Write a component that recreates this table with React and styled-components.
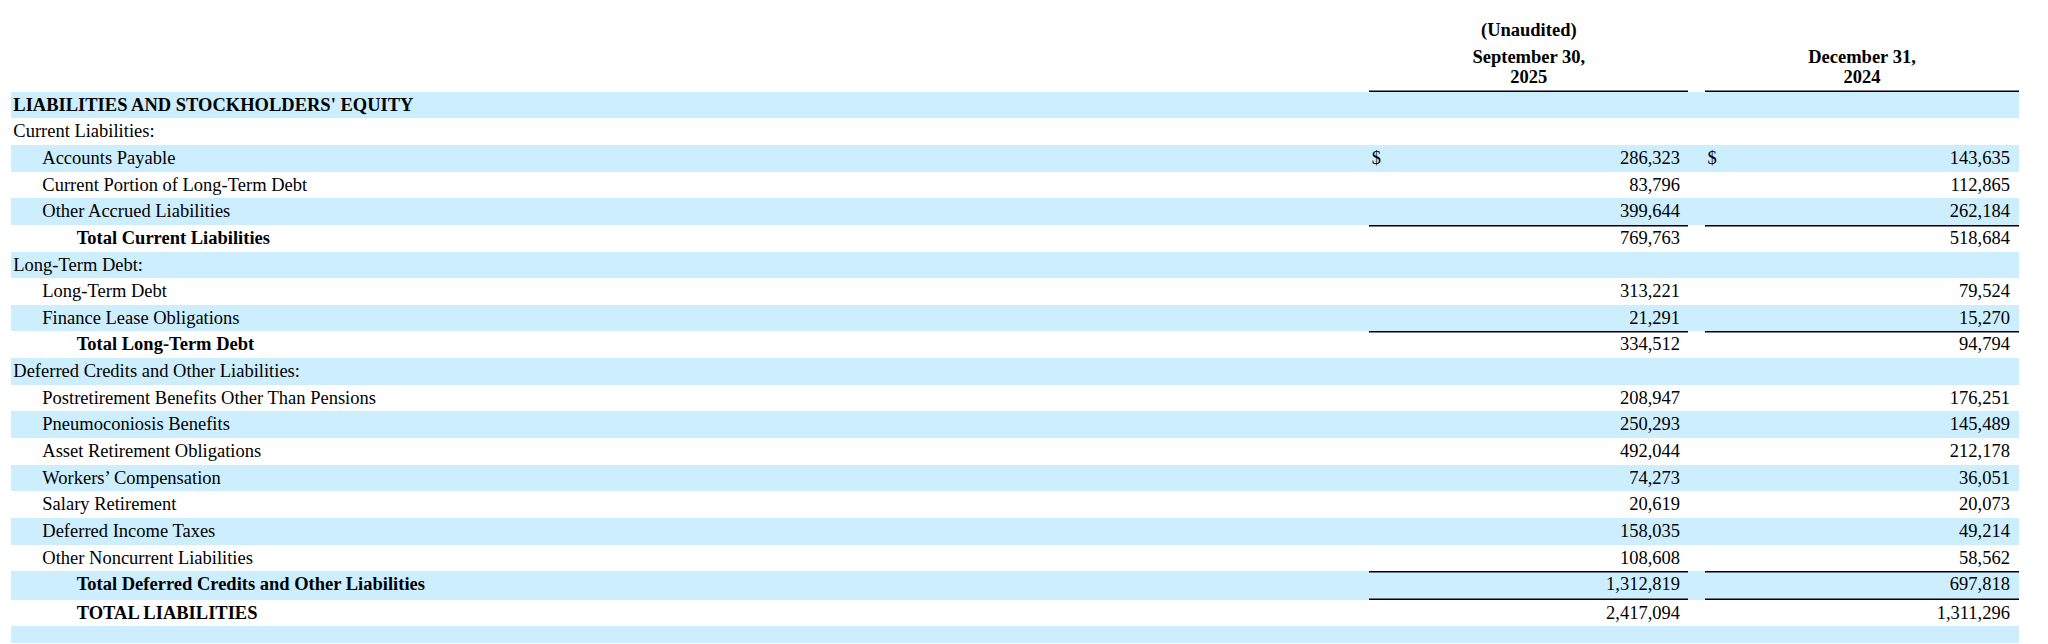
import React from "react";
import styled, {createGlobalStyle} from "styled-components";

const Shade = '#cceeff'
const Ink = '#000000'
const Columns = '1358.3px 319px 16.7px 314px'
const RowHeight = '26.67px'

const GlobalStyle = createGlobalStyle`
  html, body {
    margin: 0;
    padding: 0;
    background: #ffffff;
    overflow: hidden;
  }

  body {
    font-family: "Liberation Serif", "Times New Roman", Times, serif;
    font-size: 18.5px;
    color: ${Ink};
  }
`

const Sheet = styled.div`
  padding: 17px 0 0 11px;
  width: 2008px;
`

const HeadRow = styled.div`
  display: grid;
  grid-template-columns: ${Columns};
  line-height: ${props => props.$lineHeight || RowHeight};
`

const HeadCell = styled.div`
  grid-column: ${props => props.$col};
  text-align: center;
  font-weight: bold;
  padding: ${props => props.$ruled ? '3px 0 3.9px' : '0'};
  box-shadow: ${props => props.$ruled ? `inset 0 -1.6px 0 ${Ink}` : 'none'};
`

const Row = styled.div`
  display: grid;
  grid-template-columns: ${Columns};
  height: ${props => props.$height || RowHeight};
  line-height: ${RowHeight};
  background: ${props => props.$shade ? Shade : 'transparent'};
  white-space: nowrap;
`

const Label = styled.div`
  padding-left: ${props => ['2.3px', '31.3px', '65.7px'][props.$level]};
  font-weight: ${props => props.$bold ? 'bold' : 'normal'};
`

const Amount = styled.div`
  display: flex;
  justify-content: space-between;
  padding: 0 ${props => props.$right} 0 2.4px;
  box-shadow: ${props => [
    props.$ruleTop ? `inset 0 1.6px 0 ${Ink}` : null,
    props.$ruleBottom ? `inset 0 -1.6px 0 ${Ink}` : null,
  ].filter(Boolean).join(', ') || 'none'};
`

const Spacer = styled.div``

const rows = [
    {label: "LIABILITIES AND STOCKHOLDERS' EQUITY", level: 0, bold: true},
    {label: 'Current Liabilities:', level: 0},
    {label: 'Accounts Payable', level: 1, a: '286,323', b: '143,635', dollar: true},
    {label: 'Current Portion of Long-Term Debt', level: 1, a: '83,796', b: '112,865'},
    {label: 'Other Accrued Liabilities', level: 1, a: '399,644', b: '262,184'},
    {label: 'Total Current Liabilities', level: 2, bold: true, a: '769,763', b: '518,684', ruleTop: true},
    {label: 'Long-Term Debt:', level: 0},
    {label: 'Long-Term Debt', level: 1, a: '313,221', b: '79,524'},
    {label: 'Finance Lease Obligations', level: 1, a: '21,291', b: '15,270'},
    {label: 'Total Long-Term Debt', level: 2, bold: true, a: '334,512', b: '94,794', ruleTop: true},
    {label: 'Deferred Credits and Other Liabilities:', level: 0},
    {label: 'Postretirement Benefits Other Than Pensions', level: 1, a: '208,947', b: '176,251'},
    {label: 'Pneumoconiosis Benefits', level: 1, a: '250,293', b: '145,489'},
    {label: 'Asset Retirement Obligations', level: 1, a: '492,044', b: '212,178'},
    {label: 'Workers’ Compensation', level: 1, a: '74,273', b: '36,051'},
    {label: 'Salary Retirement', level: 1, a: '20,619', b: '20,073'},
    {label: 'Deferred Income Taxes', level: 1, a: '158,035', b: '49,214'},
    {label: 'Other Noncurrent Liabilities', level: 1, a: '108,608', b: '58,562'},
    {
        label: 'Total Deferred Credits and Other Liabilities',
        level: 2,
        bold: true,
        a: '1,312,819',
        b: '697,818',
        ruleTop: true,
        ruleBottom: true,
        height: '28.2px',
    },
    {label: 'TOTAL LIABILITIES', level: 2, bold: true, a: '2,417,094', b: '1,311,296'},
    {label: '', level: 0, height: '17px'},
]

const App = () => {
    return (
        <>
            <GlobalStyle/>
            <Sheet>
                <HeadRow>
                    <HeadCell $col={2}>(Unaudited)</HeadCell>
                </HeadRow>
                <HeadRow $lineHeight={'20.5px'}>
                    <HeadCell $col={2} $ruled>September 30,<br/>2025</HeadCell>
                    <HeadCell $col={4} $ruled>December 31,<br/>2024</HeadCell>
                </HeadRow>

                {rows.map((row, index) => (
                    <Row
                        key={index}
                        $shade={index % 2 === 0}
                        $height={row.height}
                    >
                        <Label
                            $level={row.level}
                            $bold={row.bold}
                        >
                            {row.label}
                        </Label>

                        <Amount
                            $right={'8.3px'}
                            $ruleTop={row.ruleTop}
                            $ruleBottom={row.ruleBottom}
                        >
                            <span>{row.dollar ? '$' : ''}</span>
                            <span>{row.a}</span>
                        </Amount>

                        <Spacer/>

                        <Amount
                            $right={'9px'}
                            $ruleTop={row.ruleTop}
                            $ruleBottom={row.ruleBottom}
                        >
                            <span>{row.dollar ? '$' : ''}</span>
                            <span>{row.b}</span>
                        </Amount>
                    </Row>
                ))}
            </Sheet>
        </>
    )
}

export default App;
